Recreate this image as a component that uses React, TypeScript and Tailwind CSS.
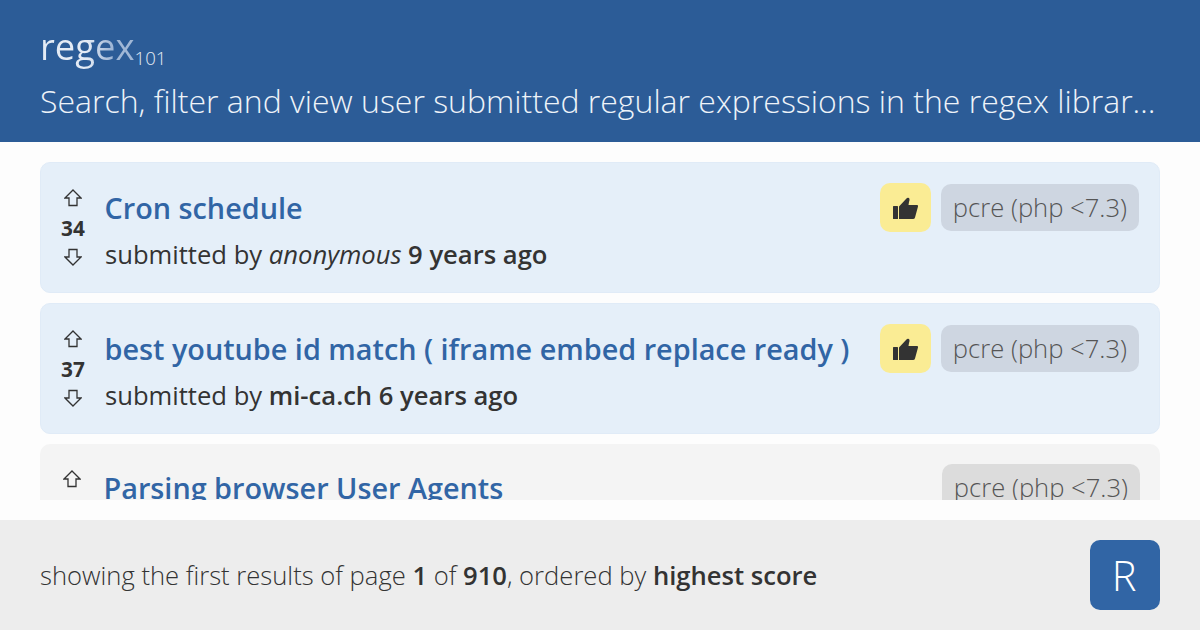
import React from 'react';

const FONT = "font-['Open_Sans',sans-serif]";

const ArrowUp = () => (
  <svg width="18" height="18" viewBox="0 0 18 18" fill="none" stroke="#333" strokeWidth="1.3">
    <path d="M9 1 L17 9 H13 V16.5 H5 V9 H1 Z" strokeLinejoin="miter" />
  </svg>
);

const ArrowDown = () => (
  <svg width="18" height="18" viewBox="0 0 18 18" fill="none" stroke="#333" strokeWidth="1.3">
    <path d="M9 17 L17 9 H13 V1.5 H5 V9 H1 Z" strokeLinejoin="miter" />
  </svg>
);

const ThumbUp = () => (
  <svg width="25" height="22" viewBox="0 0 25 22" fill="#333">
    <rect x="0" y="9" width="5" height="13" rx="0.5" />
    <path d="M6 9.5 L13 2 Q14.5 0 16 1 Q17 2 16 5 L15.5 8 H24 Q25.3 8 25 9.5 L22 20.5 Q21.6 22 20 22 H6 Z" />
  </svg>
);

interface Entry {
  title: string;
  score: number;
  author: string;
  anonymous: boolean;
  age: string;
}

const entries: Entry[] = [
  { title: 'Cron schedule', score: 34, author: 'anonymous', anonymous: true, age: '9 years ago' },
  { title: 'best youtube id match ( iframe embed replace ready )', score: 37, author: 'mi-ca.ch', anonymous: false, age: '6 years ago' },
];

const EntryCard: React.FC<{ entry: Entry }> = ({ entry }) => (
  <div className="flex h-[131px] shrink-0 rounded-[10px] border border-[#e0ebf7] bg-[#e5eff9] pr-[20px] pl-[20px]">
    <div className="mr-[20px] flex w-[24px] shrink-0 flex-col items-center pt-[26px]">
      <ArrowUp />
      <div className="mt-[7px] text-[20.8px] leading-[28px] font-bold text-[#333]">{entry.score}</div>
      <div className="mt-[6px]">
        <ArrowDown />
      </div>
    </div>
    <div className="min-w-0 flex-1 pt-[25px]">
      <div className="ml-[-0.5px] text-[28.8px] leading-[40px] font-semibold whitespace-nowrap text-[#3165a5]">{entry.title}</div>
      <div className="mt-[9px] text-[25.6px] leading-[35px] whitespace-nowrap text-[#333]">
        submitted by{' '}
        {entry.anonymous ? <i>{entry.author}</i> : <b className="font-semibold">{entry.author}</b>}{' '}
        <b className="font-semibold">{entry.age}</b>
      </div>
    </div>
    <div className="flex h-fit items-center gap-[10px] pt-[20px]">
      <div className="flex h-[49px] w-[51px] items-center justify-center rounded-[10px] bg-[#faec94]">
        <ThumbUp />
      </div>
      <div className="flex h-[47px] items-center rounded-[10px] bg-[#ced6e1] px-[12px] pt-[1px] text-[25.6px] font-light text-[#555]">
        pcre (php &lt;7.3)
      </div>
    </div>
  </div>
);

export default function App() {
  return (
    <div className={`flex h-[630px] w-[1200px] flex-col overflow-hidden bg-[#fdfdfd] ${FONT}`}>
      <header className="h-[142px] shrink-0 bg-[#2c5c97] px-[40px] pt-[21px]">
        <div className="flex h-[50px] items-baseline">
          <span className="bg-gradient-to-r from-[#e4ebf5] from-50% to-[#a0b7d6] to-75% bg-clip-text text-[36.4px] leading-[50px] font-normal text-transparent">
            regex
          </span>
          <span className="relative top-[5px] text-[18.6px] font-light text-[#e5ecf5]">101</span>
        </div>
        <div className="mt-[8px] truncate text-[32px] leading-[44px] font-light text-[#eef3f9]">
          Search, filter and view user submitted regular expressions in the regex library. Over 15,000 entries, and counting!
        </div>
      </header>

      <main className="mx-[40px] mt-[20px] flex h-[338px] shrink-0 flex-col gap-[10px] overflow-hidden">
        {entries.map((entry) => (
          <EntryCard key={entry.title} entry={entry} />
        ))}
        <div className="flex h-[131px] shrink-0 rounded-[10px] bg-[#f4f4f4] pr-[20px] pl-[20px]">
          <div className="mr-[20px] flex w-[24px] shrink-0 flex-col items-center pt-[26px]">
            <ArrowUp />
          </div>
          <div className="ml-[-0.5px] flex-1 pt-[24px] text-[28.8px] leading-[40px] font-semibold text-[#3165a5]">Parsing browser User Agents</div>
          <div className="pt-[20px]">
            <div className="flex h-[47px] items-center rounded-[10px] bg-[#dcdcdc] px-[12px] pt-[1px] text-[25.6px] font-light text-[#555]">
              pcre (php &lt;7.3)
            </div>
          </div>
        </div>
      </main>

      <footer className="mt-[20px] flex h-[110px] shrink-0 items-center justify-between bg-[#ededed] px-[40px]">
        <div className="pt-[2px] text-[25.6px] font-light text-[#333]">
          showing the first results of page <b className="font-semibold">1</b> of <b className="font-semibold">910</b>, ordered by <b className="font-semibold">highest score</b>
        </div>
        <div className="flex h-[70px] w-[70px] items-center justify-center rounded-[10px] bg-[#3165a5] pr-[2px] text-[41.6px] font-light text-white">R</div>
      </footer>
    </div>
  );
}
